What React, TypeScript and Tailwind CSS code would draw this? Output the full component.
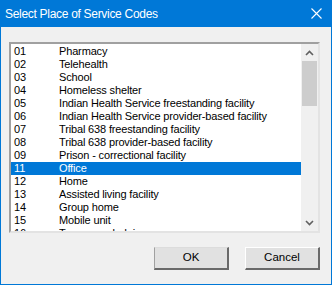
import React from 'react'

const codes: [string, string][] = [
  ['01', 'Pharmacy'],
  ['02', 'Telehealth'],
  ['03', 'School'],
  ['04', 'Homeless shelter'],
  ['05', 'Indian Health Service freestanding facility'],
  ['06', 'Indian Health Service provider-based facility'],
  ['07', 'Tribal 638 freestanding facility'],
  ['08', 'Tribal 638 provider-based facility'],
  ['09', 'Prison - correctional facility'],
  ['11', 'Office'],
  ['12', 'Home'],
  ['13', 'Assisted living facility'],
  ['14', 'Group home'],
  ['15', 'Mobile unit'],
  ['16', 'Temporary lodging'],
]

const selected = '11'

function Chevron({ up }: { up?: boolean }) {
  return (
    <svg width="9" height="6" viewBox="0 0 9 6" className="block">
      <path
        d={up ? 'M1 5 L4.5 1.5 L8 5' : 'M1 1 L4.5 4.5 L8 1'}
        fill="none"
        stroke="#606060"
        strokeWidth="1.6"
      />
    </svg>
  )
}

function WinButton({ label, isDefault }: { label: string; isDefault?: boolean }) {
  return (
    <button
      className={`h-[23px] w-[75px] bg-[#e1e1e1] text-[11.5px] leading-none text-black border border-r-2 border-b-2 border-r-[#696969] border-b-[#696969] ${
        isDefault ? 'border-t-[#dcdcdc] border-l-[#a0a0a0]' : 'border-t-[#ffffff] border-l-[#ffffff]'
      }`}
      style={{ fontFamily: '"Liberation Sans", Arial, sans-serif' }}
    >
      {label}
    </button>
  )
}

export default function App() {
  return (
    <div
      className="w-[332px] h-[285px] bg-[#0078d7] flex flex-col overflow-hidden"
      style={{ fontFamily: '"Liberation Sans", Arial, sans-serif' }}
    >
      {/* Title bar */}
      <div className="h-[27px] flex items-center justify-between pl-[5px] pr-[10px] shrink-0">
        <span className="text-white text-[12px] leading-none tracking-[-0.3px]">Select Place of Service Codes</span>
        <svg width="11" height="11" viewBox="0 0 11 11">
          <path d="M0.5 0.5 L10.5 10.5 M10.5 0.5 L0.5 10.5" stroke="#ffffff" strokeWidth="1.1" />
        </svg>
      </div>

      {/* Body */}
      <div className="flex-1 mx-px mb-px bg-[#f0f0f0] flex flex-col pt-[15px] pl-[8px] pr-[11px]">
        {/* List box */}
        <div className="h-[191px] flex border-2 border-t-[#a0a0a0] border-l-[#a0a0a0] border-r-[#e3e3e3] border-b-[#e3e3e3] bg-white">
          <div className="flex-1 overflow-hidden pt-px">
            {codes.map(([code, name]) => {
              const sel = code === selected
              return (
                <div
                  key={code}
                  className={`h-[13px] flex text-[11px] leading-[13px] tracking-[-0.15px] whitespace-nowrap ${
                    sel ? 'bg-[#0078d7] text-white' : 'text-black'
                  }`}
                >
                  <span className="w-[48px] pl-[3px]">{code}</span>
                  <span>{name}</span>
                </div>
              )
            })}
          </div>
          {/* Scrollbar */}
          <div className="w-[17px] bg-[#f0f0f0] flex flex-col items-center">
            <div className="h-[17px] w-full flex items-center justify-center">
              <Chevron up />
            </div>
            <div className="flex-1 w-full px-px">
              <div className="h-[45px] w-full bg-[#cdcdcd]" />
            </div>
            <div className="h-[17px] w-full flex items-center justify-center">
              <Chevron />
            </div>
          </div>
        </div>

        {/* Buttons */}
        <div className="flex justify-end gap-[16px] mt-[14px]">
          <WinButton label="OK" isDefault />
          <WinButton label="Cancel" />
        </div>
      </div>
    </div>
  )
}
